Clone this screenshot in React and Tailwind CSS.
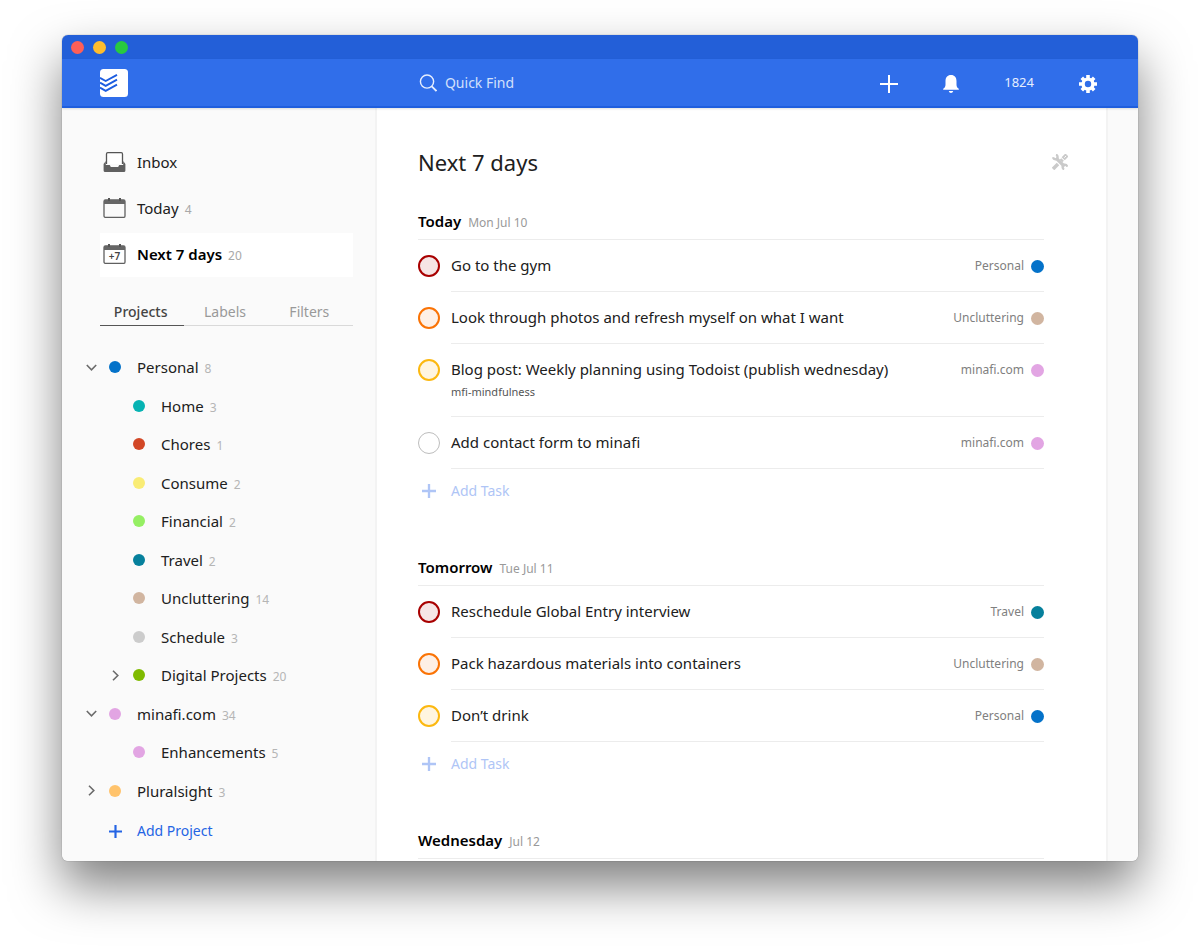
import { useState } from "react";

const navItems = [
  { name: "Inbox", icon: InboxIcon },
  { name: "Today", count: 4, icon: CalendarIcon },
  { name: "Next 7 days", count: 20, icon: WeekIcon },
];

const tabs = ["Projects", "Labels", "Filters"];

const projects = [
  { name: "Personal", count: 8, color: "bg-[#0472c9]", chevron: "down" },
  { name: "Home", count: 3, color: "bg-[#06b3b3]", nested: true },
  { name: "Chores", count: 1, color: "bg-[#d24726]", nested: true },
  { name: "Consume", count: 2, color: "bg-[#f9ec75]", nested: true },
  { name: "Financial", count: 2, color: "bg-[#95ef63]", nested: true },
  { name: "Travel", count: 2, color: "bg-[#06809c]", nested: true },
  { name: "Uncluttering", count: 14, color: "bg-[#d1b5a0]", nested: true },
  { name: "Schedule", count: 3, color: "bg-[#cccccc]", nested: true },
  {
    name: "Digital Projects",
    count: 20,
    color: "bg-[#7fba00]",
    nested: true,
    chevron: "right",
  },
  { name: "minafi.com", count: 34, color: "bg-[#e2a5e3]", chevron: "down" },
  { name: "Enhancements", count: 5, color: "bg-[#e2a5e3]", nested: true },
  { name: "Pluralsight", count: 3, color: "bg-[#ffc36c]", chevron: "right" },
];

const priorityStyles = {
  1: "border-2 border-[#a80000] bg-[#f6e5e5]",
  2: "border-2 border-[#fa7305] bg-[#fef0e6]",
  3: "border-2 border-[#fcb810] bg-[#fff5e0]",
  4: "border border-[#bdbdbd] bg-white",
};

const days = [
  {
    name: "Today",
    date: "Mon Jul 10",
    tasks: [
      {
        title: "Go to the gym",
        priority: 1,
        project: "Personal",
      },
      {
        title: "Look through photos and refresh myself on what I want",
        priority: 2,
        project: "Uncluttering",
      },
      {
        title: "Blog post: Weekly planning using Todoist (publish wednesday)",
        label: "mfi-mindfulness",
        priority: 3,
        project: "minafi.com",
      },
      {
        title: "Add contact form to minafi",
        priority: 4,
        project: "minafi.com",
      },
    ],
  },
  {
    name: "Tomorrow",
    date: "Tue Jul 11",
    tasks: [
      {
        title: "Reschedule Global Entry interview",
        priority: 1,
        project: "Travel",
      },
      {
        title: "Pack hazardous materials into containers",
        priority: 2,
        project: "Uncluttering",
      },
      { title: "Don’t drink", priority: 3, project: "Personal" },
    ],
  },
  { name: "Wednesday", date: "Jul 12", tasks: [] },
];

function InboxIcon() {
  return (
    <svg width="23" height="20" viewBox="0 0 23 20" aria-hidden="true">
      <path
        d="M3.5 12V2a1.3 1.3 0 0 1 1.3-1.3h13.4A1.3 1.3 0 0 1 19.5 2v10"
        fill="#fff"
        stroke="#555"
        strokeWidth="1.3"
      />
      <path
        d="M2.8 9 .6 12v6.500a1.500 1.500 0 0 0 1.500 1.500h18.800a1.500 1.500 0 0 0 1.500-1.500V12L20.200 9v4H16.500c-.8 0-.7 2-1.700 2H8.200c-1 0-.9-2-1.700-2H2.800z"
        fill="#606060"
      />
    </svg>
  );
}

function CalendarIcon({ children }) {
  return (
    <svg width="23" height="20" viewBox="0 0 23 20" aria-hidden="true">
      <rect
        x="1"
        y="2"
        width="21"
        height="17.4"
        rx="1.5"
        fill="none"
        stroke="#606060"
        strokeWidth="1.3"
      />
      <path d="M1 2h21v4H1z" fill="#666" />
      <path d="M6 0v3M17 0v3" stroke="#555" strokeWidth="2" />
      {children}
    </svg>
  );
}

function WeekIcon() {
  return (
    <CalendarIcon>
      <text x="11.5" y="16" fontSize="10" textAnchor="middle" fill="#444">
        +7
      </text>
    </CalendarIcon>
  );
}

function Logo() {
  return (
    <svg width="28" height="28" viewBox="0 0 28 28" aria-hidden="true">
      <rect width="28" height="28" rx="3.5" fill="#fff" />
      <path
        d="M0 8.800 5.700 12 17 5.800M0 13.700 5.700 16.900 17 10.700M0 18.600 5.700 21.800 17 15.600"
        fill="none"
        stroke="#1d5de0"
        strokeWidth="1.900"
      />
    </svg>
  );
}

function SearchIcon() {
  return (
    <svg width="19" height="19" viewBox="0 0 19 19" aria-hidden="true">
      <circle cx="8.500" cy="8.500" r="7" fill="none" stroke="#e6eefe" strokeWidth="1.500" />
      <path d="m13.500 13.500 5 5" stroke="#e6eefe" strokeWidth="1.900" />
    </svg>
  );
}

function BellIcon() {
  return (
    <svg width="16" height="18" viewBox="0 0 16 18" aria-hidden="true">
      <path
        d="M8 0c3.600 0 5.500 2.500 5.500 6v3.500c0 2 .6 3.200 2.300 4.200v1.100H.2v-1.100c1.700-1 2.300-2.200 2.300-4.200V6C2.500 2.500 4.400 0 8 0zM5.800 16h4.400c-.3 1.200-1.100 1.900-2.200 1.900S6.100 17.200 5.800 16z"
        fill="#fff"
      />
    </svg>
  );
}

function GearIcon() {
  return (
    <svg width="18" height="18" viewBox="0 0 18 18" aria-hidden="true">
      <circle cx="9" cy="9" r="4.900" fill="none" stroke="#fff" strokeWidth="3.400" />
      <g stroke="#fff" strokeWidth="3.600">
        <path d="M9 0v4M9 14v4M0 9h4M14 9h4" />
        <path d="m2.800 2.800 2.600 2.600M12.600 12.600l2.600 2.600M2.800 15.200l2.600-2.600M12.600 5.400l2.600-2.600" />
      </g>
    </svg>
  );
}

function ToolsIcon() {
  return (
    <svg width="16" height="16" viewBox="0 0 16 16" aria-hidden="true">
      <g fill="none" stroke="#cacaca">
        <path d="m4 4 8.500 8.500" strokeWidth="3.200" />
        <path d="M1 3.300C1.700 6.200 6 5.800 5.600 2.800 5.500 1.800 4.900 1 4 .8" strokeWidth="2.300" />
        <path d="M15.200 12.700c-.7-2.900-5-2.500-4.600.5.100 1 .7 1.800 1.600 2" strokeWidth="2.300" />
        <path d="m1 15 5-5" strokeWidth="3.600" />
        <path d="m9 7 1.600-1.600" strokeWidth="3.600" />
        <path d="m11.200 4.800 3.800-3.800" strokeWidth="4.400" />
      </g>
      <path d="m12.300 3.700 1.800-1.800" stroke="#fff" strokeWidth="1" />
    </svg>
  );
}

function PlusIcon({ size, thickness }) {
  return (
    <svg width={size} height={size} viewBox="0 0 18 18" aria-hidden="true">
      <path d="M9 0v18M0 9h18" stroke="currentColor" strokeWidth={thickness} />
    </svg>
  );
}

function Chevron({ direction }) {
  return (
    <svg width="11" height="11" viewBox="0 0 11 11" aria-hidden="true">
      <path
        d={direction === "down" ? "m.8 3 4.700 4.800L10.200 3" : "m3 .8 4.800 4.700L3 10.200"}
        fill="none"
        stroke="#6b6b6b"
        strokeWidth="1.600"
      />
    </svg>
  );
}

function Header() {
  return (
    <header className="relative">
      <div className="flex h-6 items-center gap-[9px] bg-[#235fd8] pl-[9px]">
        <span className="size-[13px] rounded-full bg-[#fe5f58]" />
        <span className="size-[13px] rounded-full bg-[#ffbd2d]" />
        <span className="size-[13px] rounded-full bg-[#28ca41]" />
      </div>
      <div className="flex h-[49px] items-center border-b-2 border-[#1f5edd] bg-[#306eea] shadow-[0_1px_2px_rgba(0,0,0,0.12)]">
        <a href="#" aria-label="Todoist" className="w-[357px] shrink-0 pl-[38px]">
          <Logo />
        </a>
        <label className="flex min-w-0 flex-1 items-center gap-2">
          <SearchIcon />
          <input
            type="text"
            aria-label="Quick Find"
            placeholder="Quick Find"
            className="w-full min-w-0 text-sm text-white outline-none placeholder:text-[#d3e0fb]"
          />
        </label>
        <div className="flex items-center gap-[45px] pr-[41px] text-white">
          <button aria-label="Add task" className="pt-[3px]">
            <PlusIcon size={18} thickness={2} />
          </button>
          <button aria-label="Notifications" className="pt-[3px]">
            <BellIcon />
          </button>
          <a href="#" className="text-[13px] text-[#e6eefe]">
            1824
          </a>
          <button aria-label="Settings" className="pt-[3px]">
            <GearIcon />
          </button>
        </div>
      </div>
    </header>
  );
}

function Sidebar() {
  const [activeNav, setActiveNav] = useState("Next 7 days");
  const [activeTab, setActiveTab] = useState("Projects");

  return (
    <aside className="w-[315px] shrink-0 border-r-2 border-[#f3f3f3] bg-[#fafafa] pt-[33px]">
      <nav className="mr-[22px] ml-[38px] flex flex-col gap-0.5">
        {navItems.map(({ name, count, icon: Icon }) => (
          <a
            key={name}
            href="#"
            onClick={() => setActiveNav(name)}
            className={`flex h-11 items-center gap-[11px] pb-0.5 pl-[3px] ${
              activeNav === name ? "bg-white font-semibold text-black" : ""
            }`}
          >
            <Icon />
            <span className="flex items-baseline gap-1.5">
              {name}
              {count && (
                <span className="text-xs font-normal text-[#a8a8a8]">{count}</span>
              )}
            </span>
          </a>
        ))}
      </nav>

      <div className="mt-[21px] mr-[22px] ml-[38px] grid h-7 grid-cols-3 border-b border-[#d9d9d9] text-sm">
        {tabs.map((tab) => (
          <button
            key={tab}
            onClick={() => setActiveTab(tab)}
            className={`-mb-px border-b pr-[3px] ${
              activeTab === tab
                ? "border-[#555] font-medium text-[#444]"
                : "border-transparent text-[#999]"
            }`}
          >
            {tab}
          </button>
        ))}
      </div>

      <ul className="mt-[22px] grid h-[462px] auto-rows-fr">
        {projects.map((project) => (
          <li
            key={project.name}
            className={`flex items-center ${project.nested ? "pl-12" : "pl-6"}`}
          >
            <span className="w-[23px]">
              {project.chevron && (
                <button aria-label={`Toggle ${project.name}`} className="block">
                  <Chevron direction={project.chevron} />
                </button>
              )}
            </span>
            <span className={`mr-4 size-3 rounded-full ${project.color}`} />
            <a href="#" className="flex items-baseline gap-1.5">
              {project.name}
              <span className="text-xs text-[#b5b5b5]">{project.count}</span>
            </a>
          </li>
        ))}
      </ul>
      <button className="ml-[47px] flex h-[42px] items-center gap-[15px] text-sm text-[#2464e4]">
        <PlusIcon size={13} thickness={3} />
        Add Project
      </button>
    </aside>
  );
}

function Task({ task, id }) {
  const project = projects.find((p) => p.name === task.project);

  return (
    <li className="flex gap-[11px]">
      <input
        type="checkbox"
        id={id}
        className={`mt-[15px] size-[22px] shrink-0 appearance-none rounded-full ${
          priorityStyles[task.priority]
        }`}
      />
      <div
        className={`flex flex-1 items-start justify-between border-b border-[#ececec] pt-[13px] ${
          task.label ? "h-[73px]" : "h-[52px]"
        }`}
      >
        <div>
          <label htmlFor={id} className="block leading-6">
            {task.title}
          </label>
          {task.label && (
            <a href="#" className="block text-[11px] leading-[22px] text-[#555]">
              {task.label}
            </a>
          )}
        </div>
        <a href="#" className="flex items-center gap-[7px] text-xs leading-[26px] text-[#808080]">
          {task.project}
          <span className={`size-[13px] rounded-full ${project.color}`} />
        </a>
      </div>
    </li>
  );
}

function Day({ day }) {
  return (
    <section>
      <h2 className="flex h-9 items-baseline gap-[7px] border-b border-[#ececec] font-semibold text-black">
        <span className="leading-[34px]">{day.name}</span>
        <span className="text-xs font-normal text-[#999]">{day.date}</span>
      </h2>
      {day.tasks.length > 0 && (
        <>
          <ul>
            {day.tasks.map((task, i) => (
              <Task key={task.title} task={task} id={`${day.name}-${i}`} />
            ))}
          </ul>
          <button className="mb-[37px] ml-1 flex h-11 items-center gap-[15px] text-sm text-[#afc5f6]">
            <PlusIcon size={14} thickness={3} />
            Add Task
          </button>
        </>
      )}
    </section>
  );
}

export default function App() {
  return (
    <div className="min-h-screen overflow-hidden bg-white px-[62px] pt-[35px] pb-[88px] font-['Noto_Sans',sans-serif] text-[15px] text-[#202020]">
      <div className="overflow-hidden rounded-md shadow-[0_25px_50px_rgba(0,0,0,0.5),0_0_1px_rgba(0,0,0,0.6)]">
        <Header />
        <div className="flex">
          <Sidebar />
          <main className="min-w-0 flex-1 bg-white pt-[35px] pr-[62px] pb-0.5 pl-[41px]">
            <div className="mb-[23px] flex h-[38px] items-center justify-between">
              <h1 className="text-[22px]">Next 7 days</h1>
              <button aria-label="View options" className="-mr-6">
                <ToolsIcon />
              </button>
            </div>
            {days.map((day) => (
              <Day key={day.name} day={day} />
            ))}
          </main>
          <div className="w-8 shrink-0 border-l-2 border-[#f3f3f3] bg-[#fafafa]" />
        </div>
      </div>
    </div>
  );
}
